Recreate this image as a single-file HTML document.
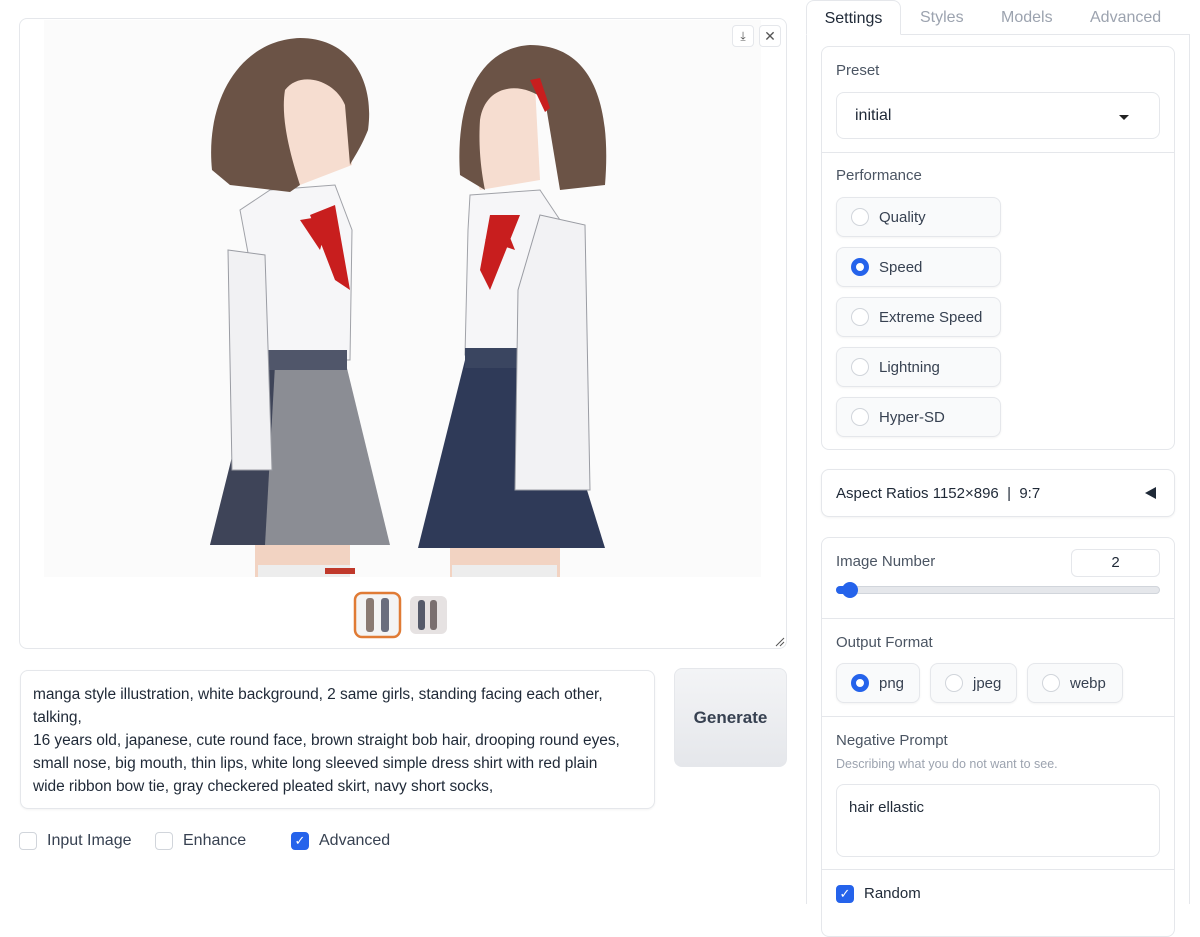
<!DOCTYPE html>
<html><head><meta charset="utf-8"><style>
*{box-sizing:border-box;margin:0;padding:0}
body{width:1200px;height:899px;overflow:hidden;background:#fff;font-family:"Liberation Sans",sans-serif;color:#374151;position:relative}
.abs{position:absolute}
.box{position:absolute;border:1px solid #e5e7eb;border-radius:8px;background:#fff}
.lbl{position:absolute;font-size:15px;color:#4b5563}
.radio{position:absolute;border:1px solid #e5e7eb;border-radius:8px;background:#f9fafb;box-shadow:0 1px 2px rgba(0,0,0,.05);font-size:15px;color:#374151}
.radio .c{position:absolute;left:14px;top:10px;width:18px;height:18px;border-radius:50%;border:1px solid #d1d5db;background:#fff}
.radio .c.on{border:5px solid #2563eb;background:#fff}
.radio span{position:absolute;left:42px;top:11px}
.cb{position:absolute;width:18px;height:18px;border:1px solid #d1d5db;border-radius:4px;background:#fff}
.cb.on{background:#2563eb;border-color:#2563eb}
.div{position:absolute;left:821px;width:354px;height:1px;background:#e5e7eb}
</style></head><body>

<!-- gallery -->
<div class="box" style="left:19px;top:18px;width:768px;height:631px"></div>
<svg class="abs" style="left:0;top:0" width="800" height="650">
<rect x="44" y="20" width="717" height="557" fill="#fbfbfb"/>
<!-- girl 1 -->
<path d="M270 190 L335 185 L352 230 L350 360 L268 360 L240 210 Z" fill="#f6f6f8" stroke="#a0a2a8"/>
<path d="M255 365 L345 360 L390 545 L210 545 Z" fill="#8b8d94"/>
<path d="M255 365 L275 365 L265 545 L210 545 Z" fill="#3e4458"/>
<rect x="255" y="350" width="92" height="20" fill="#50566a"/>
<path d="M228 250 L265 255 L272 470 L232 470 Z" fill="#f1f1f3" stroke="#9a9ca3"/>
<rect x="255" y="545" width="95" height="32" fill="#f2d3c2"/>
<rect x="258" y="565" width="92" height="12" fill="#ededed"/><rect x="325" y="568" width="30" height="6" fill="#c0392b"/>
<path d="M310 215 L335 205 L350 290 L335 280 Z M300 220 L330 215 L320 250 Z" fill="#c81e1e"/>
<path d="M280 80 L345 75 L352 165 L300 185 L285 160 Z" fill="#f6ddd0"/>
<path d="M212 170 C205 100 240 40 300 38 C350 38 375 80 368 130 C360 150 352 160 350 165 L345 105 C335 80 300 70 285 90 C280 120 292 160 300 185 L290 192 L230 185 Z" fill="#6b5346"/>
<!-- girl 2 -->
<path d="M470 195 L540 190 L560 220 L555 355 L465 355 L468 230 Z" fill="#f6f6f8" stroke="#a0a2a8"/>
<path d="M465 360 L545 355 L605 548 L418 548 Z" fill="#2f3a58"/>
<rect x="465" y="348" width="85" height="20" fill="#3a4560"/>
<path d="M540 215 L585 225 L590 490 L515 490 L518 290 Z" fill="#f2f2f4" stroke="#9a9ca3"/>
<rect x="450" y="548" width="110" height="29" fill="#f2d3c2"/>
<rect x="452" y="565" width="105" height="12" fill="#ededed"/>
<path d="M490 215 L520 215 L490 290 L480 270 Z M485 240 L505 225 L515 250 Z" fill="#c81e1e"/>
<path d="M470 90 L535 85 L540 180 L480 190 L465 150 Z" fill="#f6ddd0"/>
<path d="M460 175 C455 100 480 48 530 45 C590 45 612 100 605 185 L560 190 L545 100 C520 80 485 85 480 120 C478 150 482 175 485 190 Z" fill="#6b5346"/>
<path d="M530 80 L545 112 L550 108 L540 78 Z" fill="#c81e1e"/>
<!-- thumbs -->
<rect x="355" y="593" width="45" height="44" rx="7" fill="#f4f4f4" stroke="#e07b35" stroke-width="2.5"/>
<rect x="366" y="598" width="8" height="34" rx="3" fill="#8a7a72"/><rect x="381" y="598" width="8" height="34" rx="3" fill="#6a6e7e"/>
<rect x="410" y="596" width="37" height="38" rx="6" fill="#e6e2e2"/>
<rect x="418" y="600" width="7" height="30" rx="3" fill="#555a6a"/><rect x="430" y="600" width="7" height="30" rx="3" fill="#7a6f6f"/>
<path d="M776 646 L784 638 M780 646 L784 642" stroke="#555" stroke-width="1"/>
</svg>
<div class="abs" style="left:732px;top:25px;width:22px;height:22px;border:1px solid #e5e7eb;border-radius:4px;background:#fff;font-size:12px;text-align:center;line-height:20px;color:#555">⤓</div>
<div class="abs" style="left:759px;top:25px;width:22px;height:22px;border:1px solid #e5e7eb;border-radius:4px;background:#fff;font-size:14px;text-align:center;line-height:20px;color:#555">✕</div>

<!-- prompt -->
<div class="box" style="left:20px;top:670px;width:635px;height:139px;box-shadow:0 1px 2px rgba(0,0,0,.05)"></div>
<div class="abs" style="left:33px;top:683px;width:615px;font-size:15.5px;line-height:23px;color:#1f2937;letter-spacing:-0.05px">manga style illustration, white background, 2 same girls, standing facing each other,<br>talking,<br>16 years old, japanese, cute round face, brown straight bob hair, drooping round eyes,<br>small nose, big mouth, thin lips, white long sleeved simple dress shirt with red plain<br>wide ribbon bow tie, gray checkered pleated skirt, navy short socks,</div>
<div class="abs" style="left:674px;top:668px;width:113px;height:99px;border-radius:8px;background:linear-gradient(#f3f4f6,#e5e7eb);border:1px solid #e5e7eb;font-size:17px;font-weight:bold;color:#374151;text-align:center;line-height:97px">Generate</div>

<div class="cb" style="left:19px;top:832px"></div><div class="abs" style="left:47px;top:832px;font-size:16px">Input Image</div>
<div class="cb" style="left:155px;top:832px"></div><div class="abs" style="left:183px;top:832px;font-size:16px">Enhance</div>
<div class="cb on" style="left:291px;top:832px;color:#fff;font-size:13px;text-align:center;line-height:16px">✓</div><div class="abs" style="left:319px;top:832px;font-size:16px">Advanced</div>

<!-- right tabs -->
<div class="abs" style="left:806px;top:34px;width:384px;height:870px;border:1px solid #e5e7eb;border-bottom:none"></div>
<div class="abs" style="left:806px;top:0;width:95px;height:35px;border:1px solid #e5e7eb;border-bottom:1px solid #fff;border-radius:8px 8px 0 0;background:#fff;font-size:16px;color:#1f2937;text-align:center;line-height:35px">Settings</div>
<div class="abs" style="left:920px;top:9px;font-size:16px;color:#9ca3af">Styles</div>
<div class="abs" style="left:1001px;top:9px;font-size:16px;color:#9ca3af">Models</div>
<div class="abs" style="left:1090px;top:9px;font-size:16px;color:#9ca3af">Advanced</div>

<div class="box" style="left:821px;top:46px;width:354px;height:404px"></div>
<div class="lbl" style="left:836px;top:62px">Preset</div>
<div class="abs" style="left:836px;top:92px;width:324px;height:47px;border:1px solid #e5e7eb;border-radius:8px;font-size:16px;color:#1f2937;padding:14px 18px">initial<span style="position:absolute;right:30px;top:22px;border:5px solid transparent;border-top:5px solid #222;border-bottom:none"></span></div>
<div class="div" style="top:152px"></div>
<div class="lbl" style="left:836px;top:167px">Performance</div>
<div class="radio" style="left:836px;top:197px;width:165px;height:40px"><div class="c"></div><span>Quality</span></div>
<div class="radio" style="left:836px;top:247px;width:165px;height:40px"><div class="c on"></div><span>Speed</span></div>
<div class="radio" style="left:836px;top:297px;width:165px;height:40px"><div class="c"></div><span>Extreme Speed</span></div>
<div class="radio" style="left:836px;top:347px;width:165px;height:40px"><div class="c"></div><span>Lightning</span></div>
<div class="radio" style="left:836px;top:397px;width:165px;height:40px"><div class="c"></div><span>Hyper-SD</span></div>

<div class="box" style="left:821px;top:469px;width:354px;height:48px;box-shadow:0 1px 2px rgba(0,0,0,.05)"></div>
<div class="abs" style="left:836px;top:485px;font-size:15px;color:#1f2937">Aspect Ratios 1152×896 &nbsp;|&nbsp; 9:7</div>
<div class="abs" style="left:1145px;top:487px;border:6px solid transparent;border-right:11px solid #1f2937;border-left:none"></div>

<div class="box" style="left:821px;top:537px;width:354px;height:400px"></div>
<div class="lbl" style="left:836px;top:553px">Image Number</div>
<div class="abs" style="left:1071px;top:549px;width:89px;height:28px;border:1px solid #e5e7eb;border-radius:6px;text-align:center;line-height:26px;font-size:15px;color:#1f2937">2</div>
<div class="abs" style="left:836px;top:586px;width:324px;height:8px;border-radius:4px;background:#e5e7eb;border:1px solid #d1d5db"></div>
<div class="abs" style="left:836px;top:586px;width:20px;height:8px;border-radius:4px;background:#2563eb"></div>
<div class="abs" style="left:842px;top:582px;width:16px;height:16px;border-radius:50%;background:#2563eb"></div>
<div class="div" style="top:618px"></div>
<div class="lbl" style="left:836px;top:634px">Output Format</div>
<div class="radio" style="left:836px;top:663px;width:84px;height:40px"><div class="c on"></div><span>png</span></div>
<div class="radio" style="left:930px;top:663px;width:87px;height:40px"><div class="c"></div><span>jpeg</span></div>
<div class="radio" style="left:1027px;top:663px;width:96px;height:40px"><div class="c"></div><span>webp</span></div>
<div class="div" style="top:716px"></div>
<div class="lbl" style="left:836px;top:732px">Negative Prompt</div>
<div class="abs" style="left:836px;top:757px;font-size:12.5px;color:#9ca3af">Describing what you do not want to see.</div>
<div class="abs" style="left:836px;top:784px;width:324px;height:73px;border:1px solid #e5e7eb;border-radius:8px;font-size:15px;color:#1f2937;padding:14px 12px">hair ellastic</div>
<div class="div" style="top:869px"></div>
<div class="cb on" style="left:836px;top:885px;color:#fff;font-size:13px;text-align:center;line-height:16px">✓</div>
<div class="abs" style="left:864px;top:885px;font-size:15px;color:#1f2937">Random</div>
</body></html>
